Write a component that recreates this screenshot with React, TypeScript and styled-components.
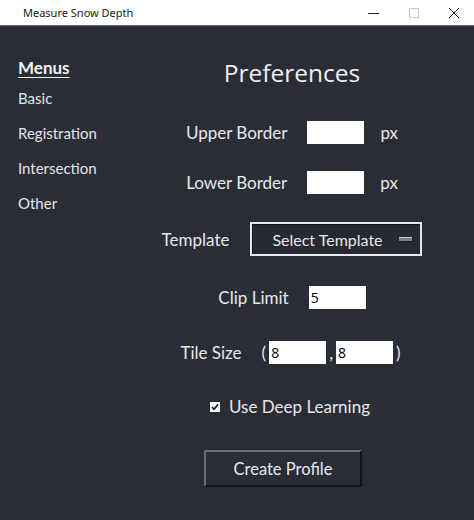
import React from 'react';
import styled, { createGlobalStyle } from 'styled-components';

const GlobalStyle = createGlobalStyle`
  html, body {
    margin: 0;
    padding: 0;
    background: #2a2d36;
  }
  body {
    font-family: Lato, "Open Sans", sans-serif;
  }
`;

const Window = styled.div`
  width: 474px;
  height: 520px;
  display: flex;
  flex-direction: column;
  background: #2a2d36;
  overflow: hidden;
`;

const TitleBar = styled.div`
  height: 25px;
  flex: none;
  display: flex;
  align-items: center;
  background: #ffffff;
  border-bottom: 1px solid #6b6b6b;
  padding-left: 23px;
`;

const TitleText = styled.span`
  flex: 1;
  font-family: "Noto Sans", "Open Sans", sans-serif;
  font-size: 11px;
  color: #1a1a1a;
`;

const WinButton = styled.div`
  width: 40px;
  height: 25px;
  display: flex;
  align-items: center;
  justify-content: center;
`;

const Body = styled.div`
  flex: 1;
  display: flex;
`;

const Sidebar = styled.nav`
  width: 110px;
  flex: none;
  padding: 29px 0 0 18px;
  box-sizing: border-box;
  display: flex;
  flex-direction: column;
`;

const MenuTitle = styled.div`
  font-size: 17px;
  font-weight: 700;
  color: #f2f2f2;
  text-decoration: underline;
  text-underline-offset: 3px;
  height: 26px;
  line-height: 26px;
`;

const MenuItem = styled.div`
  font-size: 15px;
  color: #e4e4e4;
  height: 35px;
  line-height: 35px;
`;

const Content = styled.main`
  flex: 1;
  display: flex;
  flex-direction: column;
  align-items: center;
  color: #e8e8e8;
  padding-top: 30px;
`;

const Heading = styled.h1`
  margin: 0;
  font-family: "Open Sans", sans-serif;
  font-weight: 400;
  font-size: 24.5px;
  height: 34px;
  line-height: 34px;
  color: #f0f0f0;
`;

const Row = styled.div<{ $top: number; $shift?: number }>`
  display: flex;
  align-items: center;
  margin-top: ${(p) => p.$top}px;
  margin-right: ${(p) => p.$shift ?? 0}px;
  font-size: 17px;
`;

const Label = styled.span<{ $gap: number }>`
  margin-right: ${(p) => p.$gap}px;
`;

const Entry = styled.div`
  width: 57px;
  height: 23px;
  background: #ffffff;
  box-sizing: border-box;
  padding-left: 2px;
  color: #000;
  font-family: "Open Sans", sans-serif;
  font-size: 14px;
  line-height: 23px;
`;

const Unit = styled.span`
  margin-left: 16px;
`;

const Paren = styled.span`
  margin: 0 3px;
  font-size: 17px;
`;

const OptionMenu = styled.div`
  width: 172px;
  height: 34px;
  box-sizing: border-box;
  border: 2px solid #e8e8e8;
  background: #262931;
  box-shadow: inset 1px 1px 0 #15171b;
  display: flex;
  align-items: center;
  padding: 0 8px 0 20px;
`;

const OptionText = styled.span`
  flex: 1;
  font-size: 16px;
  color: #e6e6e6;
`;

const Indicator = styled.span`
  width: 13px;
  height: 3px;
  background: #7d8085;
  border-top: 1px solid #c9cbce;
  border-bottom: 1px solid #1a1b1f;
`;

const Check = styled.span`
  width: 10px;
  height: 10px;
  margin-right: 9px;
  background: #f4f4f4;
  display: flex;
  align-items: center;
  justify-content: center;
`;

const Button = styled.button`
  width: 158px;
  height: 37px;
  background: #2a2d36;
  color: #e8e8e8;
  font-family: Lato, "Open Sans", sans-serif;
  font-size: 16.5px;
  border-style: solid;
  border-width: 2px;
  border-color: #6a6d74 #111317 #111317 #6a6d74;
  padding: 0;
`;

export default function App() {
  return (
    <Window>
      <GlobalStyle />
      <TitleBar>
        <TitleText>Measure Snow Depth</TitleText>
        <WinButton>
          <svg width="12" height="12" viewBox="0 0 12 12">
            <line x1="0" y1="6.5" x2="11" y2="6.5" stroke="#222" strokeWidth="1" />
          </svg>
        </WinButton>
        <WinButton>
          <svg width="12" height="12" viewBox="0 0 12 12">
            <rect x="1.5" y="1.5" width="9" height="9" fill="none" stroke="#c8c8c8" strokeWidth="1" />
          </svg>
        </WinButton>
        <WinButton>
          <svg width="12" height="12" viewBox="0 0 12 12">
            <path d="M1 1 L11 11 M11 1 L1 11" stroke="#222" strokeWidth="1" />
          </svg>
        </WinButton>
      </TitleBar>
      <Body>
        <Sidebar>
          <MenuTitle>Menus</MenuTitle>
          <MenuItem>Basic</MenuItem>
          <MenuItem>Registration</MenuItem>
          <MenuItem>Intersection</MenuItem>
          <MenuItem>Other</MenuItem>
        </Sidebar>
        <Content>
          <Heading>Preferences</Heading>
          <Row $top={31}>
            <Label $gap={20}>Upper Border</Label>
            <Entry />
            <Unit>px</Unit>
          </Row>
          <Row $top={27}>
            <Label $gap={20}>Lower Border</Label>
            <Entry />
            <Unit>px</Unit>
          </Row>
          <Row $top={28}>
            <Label $gap={21}>Template</Label>
            <OptionMenu>
              <OptionText>Select Template</OptionText>
              <Indicator />
            </OptionMenu>
          </Row>
          <Row $top={30}>
            <Label $gap={20}>Clip Limit</Label>
            <Entry>5</Entry>
          </Row>
          <Row $top={32}>
            <Label $gap={17}>Tile Size</Label>
            <Paren>(</Paren>
            <Entry>8</Entry>
            <Paren>,</Paren>
            <Entry>8</Entry>
            <Paren>)</Paren>
          </Row>
          <Row $top={32} $shift={4}>
            <Check>
              <svg width="8" height="8" viewBox="0 0 8 8">
                <path d="M1 4 L3 6.2 L7 1.5" fill="none" stroke="#111" strokeWidth="1.6" />
              </svg>
            </Check>
            <span>Use Deep Learning</span>
          </Row>
          <Row $top={33} $shift={18}>
            <Button>Create Profile</Button>
          </Row>
        </Content>
      </Body>
    </Window>
  );
}
